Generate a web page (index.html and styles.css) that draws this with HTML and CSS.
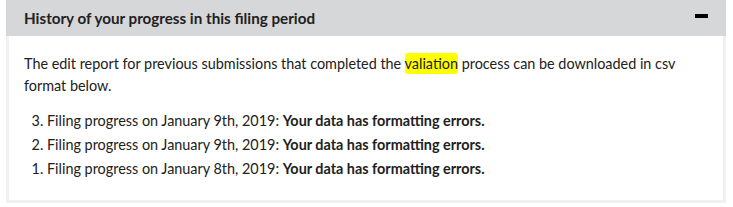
FILE: index.html
```html
<!DOCTYPE html>
<html lang="en">

<head>
    <meta charset="UTF-8">
    <title>Filing progress history</title>
    <link rel="stylesheet" href="styles.css">
</head>

<body>
    <section class="accordion">
        <div class="accordion-header">
            <h2>History of your progress in this filing period</h2>
            <span class="toggle" aria-label="collapse"></span>
        </div>
        <div class="accordion-body">
            <p>The edit report for previous submissions that completed the <mark>valiation</mark> process can be downloaded in csv format below.</p>
            <ol class="progress-list">
                <li value="3">Filing progress on January 9th, 2019: <strong>Your data has formatting errors.</strong></li>
                <li value="2">Filing progress on January 9th, 2019: <strong>Your data has formatting errors.</strong></li>
                <li value="1">Filing progress on January 8th, 2019: <strong>Your data has formatting errors.</strong></li>
            </ol>
        </div>
    </section>
</body>

</html>
```

FILE: styles.css
```css
body {
    margin: 0;
    padding: 0 7px 0 6px;
    background-color: #fff;
    color: #212121;
    font-family: Lato, "Open Sans", sans-serif;
    font-size: 14.4px;
}

.accordion {
    width: 720px;
}

.accordion-header {
    height: 36px;
    display: flex;
    align-items: center;
    justify-content: space-between;
    padding: 0 18px;
    background-color: #d6d7d9;
    box-sizing: border-box;
}

.accordion-header h2 {
    margin: 0;
    font-size: 15.2px;
    font-weight: bold;
}

.toggle {
    width: 13px;
    height: 4px;
    background-color: #000;
    margin-top: -5px;
}

.accordion-body {
    border: 3px solid #f1f1f1;
    border-top: none;
    padding: 17px 15px 19px;
}

.accordion-body p {
    margin: 0 0 12px;
    line-height: 22px;
    width: 670px;
}

mark {
    background-color: #ffff00;
    color: inherit;
    padding: 2px 0;
    border-radius: 3px;
}

.progress-list {
    margin: 0;
    padding-left: 23px;
}

.progress-list li {
    line-height: 24px;
}
```
